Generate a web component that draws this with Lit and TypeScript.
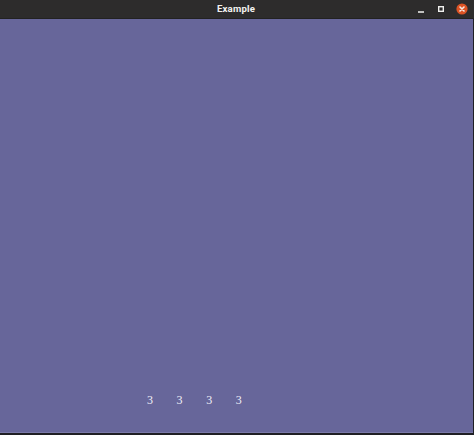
import { LitElement, html, css } from "lit";
import { customElement } from "lit/decorators.js";

@customElement("app-root")
export class AppRoot extends LitElement {
  static styles = css`
    :host { display: flex; flex-direction: column; width: 474px; height: 435px; background: #1f1f24; overflow: hidden; }
    .bar { height: 19px; flex: none; background: #2d2c2c; display: grid; grid-template-columns: 1fr auto 1fr; align-items: center; border-bottom: 1px solid #222; box-sizing: border-box; }
    .title { grid-column: 2; color: #f2f2f0; font: 700 9.6px Roboto, "Noto Sans", sans-serif; letter-spacing: 0.2px; position: relative; top: -1px; left: -1px; }
    .controls { grid-column: 3; justify-self: end; display: flex; align-items: center; padding-right: 6px; }
    .controls svg { display: block; }
    .min { margin-right: 14px; }
    .max { margin-right: 12px; }
    .main { flex: 1; margin-right: 1px; margin-bottom: 2px; background: #67669a; border-bottom: 1px solid #7a79a8; display: flex; align-items: flex-end; padding: 0 0 25px 146px; box-sizing: border-box; }
    .nums { display: flex; gap: 21.6px; color: #f0f0f8; font: 12px "Liberation Serif", serif; line-height: 13px; }
    .nums span { width: 8px; text-align: center; }
  `;

  render() {
    return html`
      <div class="bar">
        <div class="title">Example</div>
        <div class="controls">
          <svg class="min" width="6" height="12" viewBox="0 0 6 12"><rect x="0" y="8.2" width="6" height="1.6" fill="#e6e6e4"/></svg>
          <svg class="max" width="6" height="6" viewBox="0 0 6 6"><rect x="0.7" y="0.7" width="4.6" height="4.6" fill="none" stroke="#f0f0ee" stroke-width="1.4"/></svg>
          <svg width="12" height="12" viewBox="0 0 12 12"><circle cx="6" cy="6" r="5.6" fill="#dc5324"/><path d="M4 4 L8 8 M8 4 L4 8" stroke="#f6ece6" stroke-width="1.6" stroke-linecap="round"/></svg>
        </div>
      </div>
      <div class="main">
        <div class="nums"><span>3</span><span>3</span><span>3</span><span>3</span></div>
      </div>
    `;
  }
}
